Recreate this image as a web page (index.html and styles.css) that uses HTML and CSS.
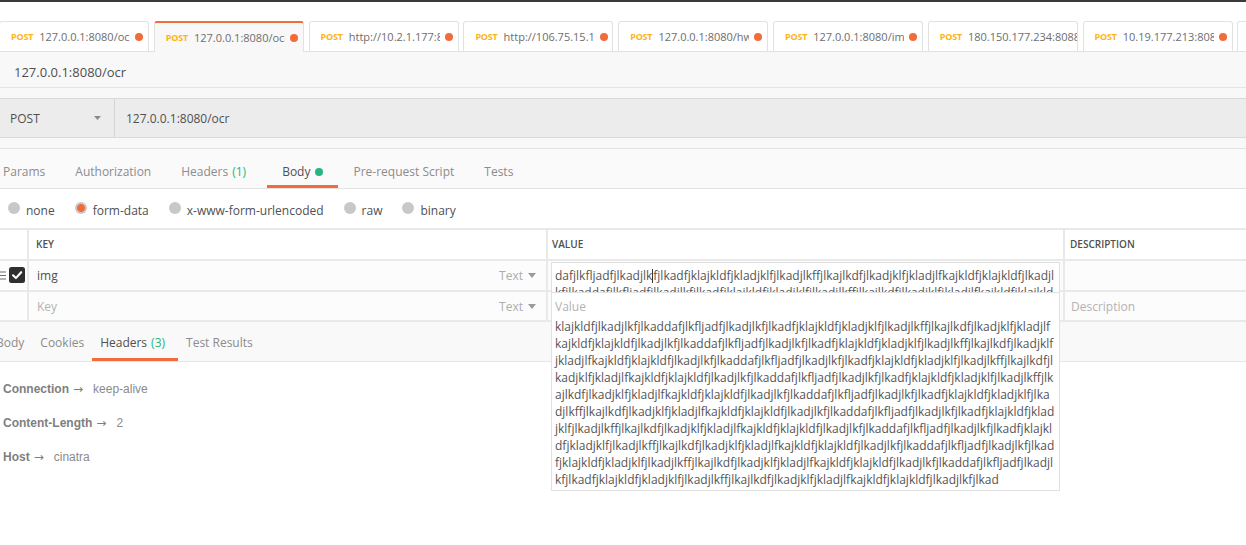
FILE: index.html
```html
<!DOCTYPE html>
<html>
<head>
<meta charset="utf-8">
<link rel="stylesheet" href="styles.css">
</head>
<body>
<div class="topline"></div>
<div class="tabstrip">
  <div class="rtab"><span class="verb">POST</span><span class="turl">127.0.0.1:8080/ocr</span><span class="dot"></span></div>
  <div class="rtab active"><span class="verb">POST</span><span class="turl">127.0.0.1:8080/ocr</span><span class="dot"></span></div>
  <div class="rtab"><span class="verb">POST</span><span class="turl">http://10.2.1.177:8080/ocr</span><span class="dot"></span></div>
  <div class="rtab"><span class="verb">POST</span><span class="turl">http://106.75.15.1:8080</span><span class="dot"></span></div>
  <div class="rtab"><span class="verb">POST</span><span class="turl">127.0.0.1:8080/hw</span><span class="dot"></span></div>
  <div class="rtab"><span class="verb">POST</span><span class="turl">127.0.0.1:8080/img</span><span class="dot"></span></div>
  <div class="rtab"><span class="verb">POST</span><span class="turl wide">180.150.177.234:8088/ocr</span></div>
  <div class="rtab"><span class="verb">POST</span><span class="turl">10.19.177.213:8080</span><span class="dot"></span></div>
  <div class="rtab"><span class="verb">POST</span><span class="turl">127.0.0.1:8080</span><span class="dot"></span></div>
</div>
<div class="reqname">127.0.0.1:8080/ocr</div>
<div class="urlarea">
  <div class="urlbar">
    <div class="method"><span>POST</span><svg class="caret" width="7" height="4" viewBox="0 0 7 4"><path d="M0 0H7L3.5 4Z" fill="#8a8a8a"/></svg></div>
    <div class="urlinput">127.0.0.1:8080/ocr</div>
  </div>
</div>
<div class="reqtabs">
  <div class="ptab">Params</div>
  <div class="ptab">Authorization</div>
  <div class="ptab">Headers<span class="count">(1)</span></div>
  <div class="ptab active body-tab">Body<span class="gdot"></span></div>
  <div class="ptab">Pre-request Script</div>
  <div class="ptab">Tests</div>
</div>
<div class="bodyopts">
  <label class="opt"><span class="radio"></span>none</label>
  <label class="opt"><span class="radio on"></span>form-data</label>
  <label class="opt"><span class="radio"></span>x-www-form-urlencoded</label>
  <label class="opt"><span class="radio"></span>raw</label>
  <label class="opt"><span class="radio"></span>binary</label>
</div>
<div class="kv">
  <div class="cell hd"></div>
  <div class="cell hd keyh">KEY</div>
  <div class="cell hd valh">VALUE</div>
  <div class="cell hd desch">DESCRIPTION</div>

  <div class="cell chk">
    <svg class="drag" width="6" height="9" viewBox="0 0 6 9"><path d="M0 1H6M0 4.5H6M0 8H6" stroke="#6d6d6d" stroke-width="1.2"/></svg>
    <svg class="box" width="16" height="16" viewBox="0 0 16 16"><rect x="0" y="0" width="16" height="16" rx="2.5" fill="#2f2f2f"/><path d="M4 8.3L6.9 11.1L12.2 5.2" fill="none" stroke="#fff" stroke-width="2.1" stroke-linecap="round" stroke-linejoin="round"/></svg>
  </div>
  <div class="cell keyc"><span class="ktext">img</span><span class="ttype">Text<svg width="8" height="5" viewBox="0 0 8 5"><path d="M0 0H8L4 5Z" fill="#9a9a9a"/></svg></span></div>
  <div class="cell valc">
    <div class="textarea">
      <div>dafjlkfljadfjlkadjlk<span class="cursor"></span>fjlkadfjklajkldfjkladjklfjlkadjlkffjlkajlkdfjlkadjklfjkladjlfkajkldfjklajkldfjlkadjl</div>
      <div>kfjlkaddafjlkfljadfjlkadjlkfjlkadfjklajkldfjkladjklfjlkadjlkffjlkajlkdfjlkadjklfjkladjlfkajkldfjklajkld</div>
      <div>fjlkadjlkfjlkaddafjlkfljadfjlkadjlkfjlkadfjklajkldfjkladjklfjlkadjlkffjlkajlkdfjlkadjklfjkladjlfkajkldfj</div>
      <div>klajkldfjlkadjlkfjlkaddafjlkfljadfjlkadjlkfjlkadfjklajkldfjkladjklfjlkadjlkffjlkajlkdfjlkadjklfjkladjlf</div>
      <div>kajkldfjklajkldfjlkadjlkfjlkaddafjlkfljadfjlkadjlkfjlkadfjklajkldfjkladjklfjlkadjlkffjlkajlkdfjlkadjklf</div>
      <div>jkladjlfkajkldfjklajkldfjlkadjlkfjlkaddafjlkfljadfjlkadjlkfjlkadfjklajkldfjkladjklfjlkadjlkffjlkajlkdfjl</div>
      <div>kadjklfjkladjlfkajkldfjklajkldfjlkadjlkfjlkaddafjlkfljadfjlkadjlkfjlkadfjklajkldfjkladjklfjlkadjlkffjlk</div>
      <div>ajlkdfjlkadjklfjkladjlfkajkldfjklajkldfjlkadjlkfjlkaddafjlkfljadfjlkadjlkfjlkadfjklajkldfjkladjklfjlka</div>
      <div>djlkffjlkajlkdfjlkadjklfjkladjlfkajkldfjklajkldfjlkadjlkfjlkaddafjlkfljadfjlkadjlkfjlkadfjklajkldfjklad</div>
      <div>jklfjlkadjlkffjlkajlkdfjlkadjklfjkladjlfkajkldfjklajkldfjlkadjlkfjlkaddafjlkfljadfjlkadjlkfjlkadfjklajkl</div>
      <div>dfjkladjklfjlkadjlkffjlkajlkdfjlkadjklfjkladjlfkajkldfjklajkldfjlkadjlkfjlkaddafjlkfljadfjlkadjlkfjlkad</div>
      <div>fjklajkldfjkladjklfjlkadjlkffjlkajlkdfjlkadjklfjkladjlfkajkldfjklajkldfjlkadjlkfjlkaddafjlkfljadfjlkadjl</div>
      <div>kfjlkadfjklajkldfjkladjklfjlkadjlkffjlkajlkdfjlkadjklfjkladjlfkajkldfjklajkldfjlkadjlkfjlkad</div>
    </div>
  </div>
  <div class="cell descc"></div>

  <div class="cell chk"></div>
  <div class="cell keyc"><span class="ktext ph">Key</span><span class="ttype">Text<svg width="8" height="5" viewBox="0 0 8 5"><path d="M0 0H8L4 5Z" fill="#9a9a9a"/></svg></span></div>
  <div class="cell valc2"><div class="valinput">Value</div></div>
  <div class="cell descc ph">Description</div>
</div>
<div class="resptabs">
  <div class="stab">Body</div>
  <div class="stab">Cookies</div>
  <div class="stab active">Headers<span class="count">(3)</span></div>
  <div class="stab">Test Results</div>
</div>
<div class="hdrs">
  <div class="hrow"><span class="hk">Connection</span><span class="arr">→</span><span class="hv">keep-alive</span></div>
  <div class="hrow"><span class="hk">Content-Length</span><span class="arr">→</span><span class="hv">2</span></div>
  <div class="hrow"><span class="hk">Host</span><span class="arr">→</span><span class="hv">cinatra</span></div>
</div>
</body>
</html>
```
FILE: styles.css
```css
* { box-sizing: border-box; }
html, body { margin: 0; padding: 0; }
body {
  width: 1246px;
  height: 545px;
  overflow: hidden;
  background: #ffffff;
  font-family: "Open Sans", "Noto Sans", sans-serif;
  color: #505050;
}

.topline {
  height: 2px;
  background: #3a3a3a;
}

/* request tabs strip */
.tabstrip {
  height: 50px;
  padding-top: 19px;
  display: flex;
  gap: 4.8px;
  margin-left: -1px;
  border-bottom: 1px solid #e2e2e2;
  white-space: nowrap;
}
.rtab {
  flex: 0 0 150px;
  height: 30px;
  display: flex;
  align-items: center;
  padding-left: 11px;
  border: 1px solid #e2e2e2;
  border-bottom: none;
  border-radius: 3px 3px 0 0;
  background: #ffffff;
  overflow: hidden;
}
.rtab.active {
  height: 31px;
  background: #f8f8f8;
  border-top: 2px solid #f26b3a;
  position: relative;
  z-index: 1;
}
.verb {
  flex: 0 0 22px;
  margin-right: 6px;
  font-size: 9px;
  font-weight: 700;
  color: #fdb414;
  letter-spacing: -0.2px;
}
.turl {
  flex: 0 0 91px;
  overflow: hidden;
  font-size: 11px;
  color: #6e6e6e;
}
.turl.wide { flex: 1 1 auto; }
.dot {
  flex: 0 0 8px;
  height: 8px;
  margin-left: 5px;
  border-radius: 50%;
  background: #f26b3a;
}

.reqname {
  height: 36px;
  padding: 5px 0 0 14px;
  background: #f8f8f8;
  border-bottom: 1px solid #e4e4e4;
  font-size: 13px;
  line-height: 31px;
  color: #4f4f4f;
}

.urlarea {
  background: #f8f8f8;
  padding: 10px 0 10px;
}
.urlbar {
  height: 40px;
  display: flex;
  background: #ececec;
  border-top: 1px solid #d9d9d9;
  border-bottom: 1px solid #d9d9d9;
  font-size: 12px;
  color: #505050;
}
.method {
  width: 115px;
  display: flex;
  align-items: center;
  justify-content: space-between;
  padding: 0 13px 0 10px;
  border-right: 1px solid #d4d4d4;
}
.urlinput {
  display: flex;
  align-items: center;
  padding-left: 11px;
}

.reqtabs {
  height: 41px;
  display: flex;
  background: #fafafa;
  border-top: 1px solid #e3e3e3;
  border-bottom: 1px solid #e3e3e3;
  margin-left: -12px;
  font-size: 12px;
}
.ptab {
  padding: 9px 15px 0;
  display: flex;
  align-items: center;
  color: #8c8c8c;
  border-bottom: 3px solid transparent;
}
.ptab.active {
  color: #505050;
  border-bottom-color: #f26b3a;
}
.body-tab { margin-left: 6px; }
.count {
  color: #26b47f;
  margin-left: 4px;
}
.gdot {
  width: 8px;
  height: 8px;
  border-radius: 50%;
  background: #26b47f;
  margin-left: 5px;
}

.bodyopts {
  height: 39px;
  display: flex;
  align-items: center;
  padding: 3px 0 0 8px;
  font-size: 12px;
  color: #505050;
}
.opt {
  display: flex;
  align-items: center;
  margin-right: 20px;
}
.radio {
  width: 12px;
  height: 12px;
  border-radius: 50%;
  background: #c8c8c8;
  margin-right: 6px;
  margin-top: -4px;
}
.radio.on {
  background: radial-gradient(circle at center, #f26b3a 0 3.6px, #c8c8c8 4.2px);
}

/* key/value table */
.kv {
  display: grid;
  grid-template-columns: 27px 517px 515px 1fr;
  grid-template-rows: 29px 29px 28px;
  gap: 2px;
  padding: 2px 0;
  background: #e9e9e9;
  font-size: 12px;
}
.cell {
  background: #ffffff;
  display: flex;
  align-items: center;
  min-width: 0;
}
.hd {
  font-size: 10px;
  font-weight: 600;
  color: #505050;
  padding-bottom: 1px;
}
.keyh { padding-left: 7px; }
.valh { padding-left: 4px; }
.desch { padding-left: 5px; }
.chk {
  background: #fdfdfd;
  position: relative;
}
.drag { position: absolute; left: 0; top: 10px; }
.box { position: absolute; left: 9px; top: 6px; }
.keyc {
  justify-content: space-between;
  padding: 0 10px 0 8px;
  background: #fcfcfc;
}
.ktext { color: #505050; }
.ph { color: #b3b3b3; }
.ttype {
  color: #acacac;
  display: flex;
  align-items: center;
  gap: 5px;
}
.valc {
  position: relative;
  background: #fcfcfc;
}
.textarea {
  position: absolute;
  left: 3px;
  top: 1px;
  width: 509px;
  z-index: 5;
  background: #ffffff;
  border: 1px solid #e1e1e1;
  padding: 4px 0 2px 3px;
  font-size: 12px;
  line-height: 17px;
  color: #555555;
  white-space: nowrap;
  overflow: hidden;
}
.cursor {
  display: inline-block;
  width: 1px;
  height: 14px;
  background: #333;
  vertical-align: -3px;
}
.valc2 {
  position: relative;
  z-index: 6;
  background: #fcfcfc;
  align-items: stretch;
  padding: 0 3px;
}
.valinput {
  flex: 1;
  background: #ffffff;
  border: 1px solid #e1e1e1;
  border-bottom: none;
  color: #b3b3b3;
  padding-left: 3px;
  display: flex;
  align-items: center;
}
.descc {
  padding-left: 6px;
  background: #fcfcfc;
}

/* response */
.resptabs {
  height: 40px;
  display: flex;
  background: #f9f9f9;
  border-bottom: 1px solid #e6e6e6;
  margin-left: -12px;
  font-size: 12px;
}
.stab {
  padding: 4px 8px 0;
  display: flex;
  align-items: center;
  color: #8c8c8c;
  border-bottom: 3px solid transparent;
}
.stab.active {
  color: #505050;
  border-bottom-color: #f26b3a;
  padding-right: 13px;
}
.hdrs {
  padding: 10px 0 0 3px;
  font-family: "Liberation Sans", Arial, sans-serif;
  font-size: 12px;
  color: #858585;
}
.hrow {
  height: 34px;
  display: flex;
  align-items: center;
}
.hk { font-weight: 700; color: #7f7f7f; }
.arr {
  font-family: "DejaVu Sans", sans-serif;
  font-size: 12px;
  margin-left: 4px;
  color: #7f7f7f;
}
.hv { margin-left: 10px; color: #8a8a8a; }
```
